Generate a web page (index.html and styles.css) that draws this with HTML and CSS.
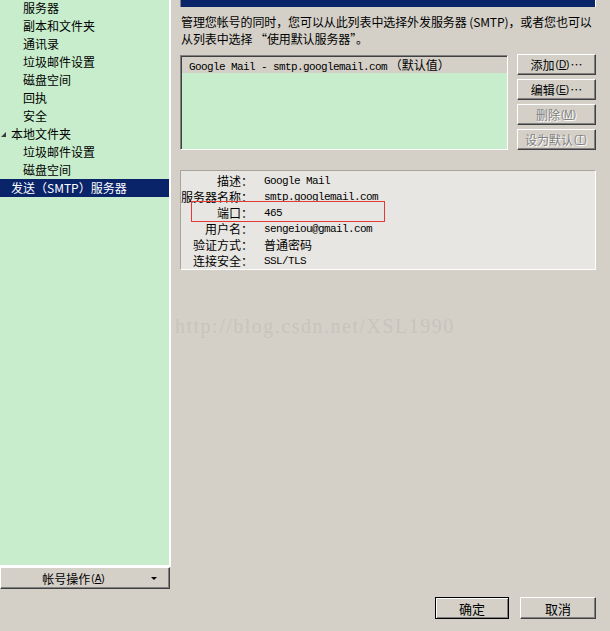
FILE: index.html
```html
<!DOCTYPE html>
<html lang="zh-CN">
<head>
  <meta charset="UTF-8" />
  <meta name="viewport" content="width=device-width, initial-scale=1" />
  <title>帐号设置 - 发送（SMTP）服务器</title>
  <link rel="stylesheet" href="styles.css">
</head>
<body>

<div class="window">
  <aside class="sidebar">
    <div class="tree">
      <ul>
        <li class="sub">服务器</li>
        <li class="sub">副本和文件夹</li>
        <li class="sub">通讯录</li>
        <li class="sub">垃圾邮件设置</li>
        <li class="sub">磁盘空间</li>
        <li class="sub">回执</li>
        <li class="sub">安全</li>
        <li class="root expanded">本地文件夹</li>
        <li class="sub">垃圾邮件设置</li>
        <li class="sub">磁盘空间</li>
        <li class="root selected">发送（SMTP）服务器</li>
      </ul>
    </div>
    <button class="btn account-btn">帐号操作<span class="key">(<u>A</u>)</span><span class="caret"></span></button>
  </aside>

  <main class="panel">
    <div class="title-bar"></div>

    <p class="intro">管理您帐号的同时，您可以从此列表中选择外发服务器 (SMTP)，或者您也可以从列表中选择 “使用默认服务器”。</p>

    <div class="server-row">
      <div class="server-list">
        <div class="server-item"><span class="mono">Google Mail - smtp.googlemail.com</span> （默认值）</div>
      </div>
      <div class="side-buttons">
        <button class="btn">添加<span class="key">(<u>D</u>)</span>…</button>
        <button class="btn">编辑<span class="key">(<u>E</u>)</span>…</button>
        <button class="btn" disabled>删除<span class="key">(<u>M</u>)</span></button>
        <button class="btn" disabled>设为默认<span class="key">(<u>T</u>)</span></button>
      </div>
    </div>

    <div class="details">
      <div class="detail-row"><span class="label">描述：</span><span class="value mono">Google Mail</span></div>
      <div class="detail-row"><span class="label">服务器名称：</span><span class="value mono">smtp.googlemail.com</span></div>
      <div class="detail-row"><span class="label">端口：</span><span class="value mono">465</span></div>
      <div class="detail-row"><span class="label">用户名：</span><span class="value mono">sengeiou@gmail.com</span></div>
      <div class="detail-row"><span class="label">验证方式：</span><span class="value">普通密码</span></div>
      <div class="detail-row"><span class="label">连接安全：</span><span class="value mono">SSL/TLS</span></div>
      <div class="highlight"></div>
    </div>

    <div class="watermark">http://blog.csdn.net/XSL1990</div>

    <div class="dialog-buttons">
      <button class="btn default ok-btn">确定</button>
      <button class="btn cancel-btn">取消</button>
    </div>
  </main>
</div>

</body>
</html>
```

FILE: styles.css
```css
:root {
  --face: #d4d0c8;
  --green: #c7edcc;
  --navy: #0a246a;
  --shadow: #808080;
  --dark: #404040;
  --detail-bg: #e8e6e2;
}

* {
  box-sizing: border-box;
  margin: 0;
  padding: 0;
}

body {
  width: 610px;
  height: 631px;
  overflow: hidden;
  background: var(--face);
  color: #000;
  font-family: "Noto Sans CJK SC", sans-serif;
  font-size: 12px;
}

.mono {
  font-family: "Liberation Mono", "Noto Sans CJK SC", monospace;
  font-size: 11px;
  letter-spacing: -0.6px;
}

.window {
  display: flex;
  height: 631px;
}

/* left tree */
.sidebar {
  width: 171px;
  display: flex;
  flex-direction: column;
}

.tree {
  height: 567px;
  background: var(--green);
  border-right: 2px solid #fff;
  border-bottom: 2px solid #fff;
  overflow: hidden;
}

.tree ul {
  list-style: none;
  margin-top: -1px;
}

.tree li {
  height: 18px;
  line-height: 18px;
  white-space: nowrap;
}

.tree li.sub {
  padding-left: 23px;
}

.tree li.root {
  padding-left: 11px;
  position: relative;
}

.tree li.expanded::before {
  content: "";
  position: absolute;
  left: 1px;
  top: 7px;
  border-left: 5px solid transparent;
  border-bottom: 5px solid #3c3c3c;
}

.tree li.selected {
  background: var(--navy);
  color: #fff;
}

/* buttons */
.btn {
  font-family: inherit;
  font-size: 12px;
  color: #000;
  background: var(--face);
  border: 1px solid;
  border-color: #fff var(--dark) var(--dark) #fff;
  box-shadow: inset -1px -1px 0 var(--shadow);
  display: flex;
  align-items: center;
  justify-content: center;
  white-space: nowrap;
}

.btn .key {
  font-family: "Liberation Sans", sans-serif;
  font-size: 10px;
  margin: 0 1px;
}

.btn:disabled {
  color: var(--shadow);
  text-shadow: 1px 1px 0 #fff;
}

.account-btn {
  position: relative;
  width: 170px;
  height: 22px;
  padding-right: 22px;
}

.account-btn .caret {
  position: absolute;
  right: 12px;
  top: 9px;
  border-left: 3px solid transparent;
  border-right: 3px solid transparent;
  border-top: 3px solid #000;
}

/* right panel */
.panel {
  flex: 1;
  display: flex;
  flex-direction: column;
  padding: 0 14px 12px 9px;
}

.title-bar {
  height: 7px;
  background: var(--navy);
  border-left: 1px solid var(--shadow);
  border-right: 1px solid #fff;
}

.intro {
  margin-top: 6px;
  padding-left: 1px;
  line-height: 17px;
  letter-spacing: -0.1px;
}

.server-row {
  display: flex;
  gap: 9px;
  margin-top: 7px;
}

.server-list {
  width: 328px;
  height: 95px;
  margin-top: 1px;
  background: var(--green);
  border: 1px solid;
  border-color: var(--shadow) #fff #fff var(--shadow);
  box-shadow: inset 1px 1px 0 var(--dark);
  padding: 1px 0 0 1px;
}

.server-item {
  height: 16px;
  line-height: 16px;
  background: var(--face);
  padding-left: 7px;
  white-space: nowrap;
}

.side-buttons {
  display: flex;
  flex-direction: column;
  gap: 4px;
}

.side-buttons .btn {
  width: 79px;
  height: 21px;
}

.details {
  position: relative;
  margin-top: 20px;
  background: var(--detail-bg);
  border: 1px solid;
  border-color: #a8a49c #fff #fff #a8a49c;
  padding-top: 2px;
}

.detail-row {
  display: flex;
  height: 16px;
  line-height: 16px;
}

.detail-row .label {
  width: 72px;
  text-align: right;
  white-space: nowrap;
}

.detail-row .value {
  margin-left: 11px;
}

.highlight {
  position: absolute;
  left: 10px;
  top: 30px;
  width: 194px;
  height: 21px;
  border: 1px solid #e53935;
}

.watermark {
  margin: 44px 0 0 -5px;
  font-family: "Liberation Serif", serif;
  font-size: 20px;
  letter-spacing: 1.5px;
  line-height: 24px;
  color: #c8c4bc;
}

.dialog-buttons {
  margin-top: auto;
  display: flex;
  justify-content: flex-end;
  gap: 11px;
}

.dialog-buttons .btn {
  height: 22px;
  font-size: 13px;
}

.ok-btn {
  width: 74px;
}

.cancel-btn {
  width: 76px;
}

.btn.default {
  border-color: #000;
  box-shadow: inset 1px 1px 0 #fff, inset -1px -1px 0 var(--shadow);
}
```
